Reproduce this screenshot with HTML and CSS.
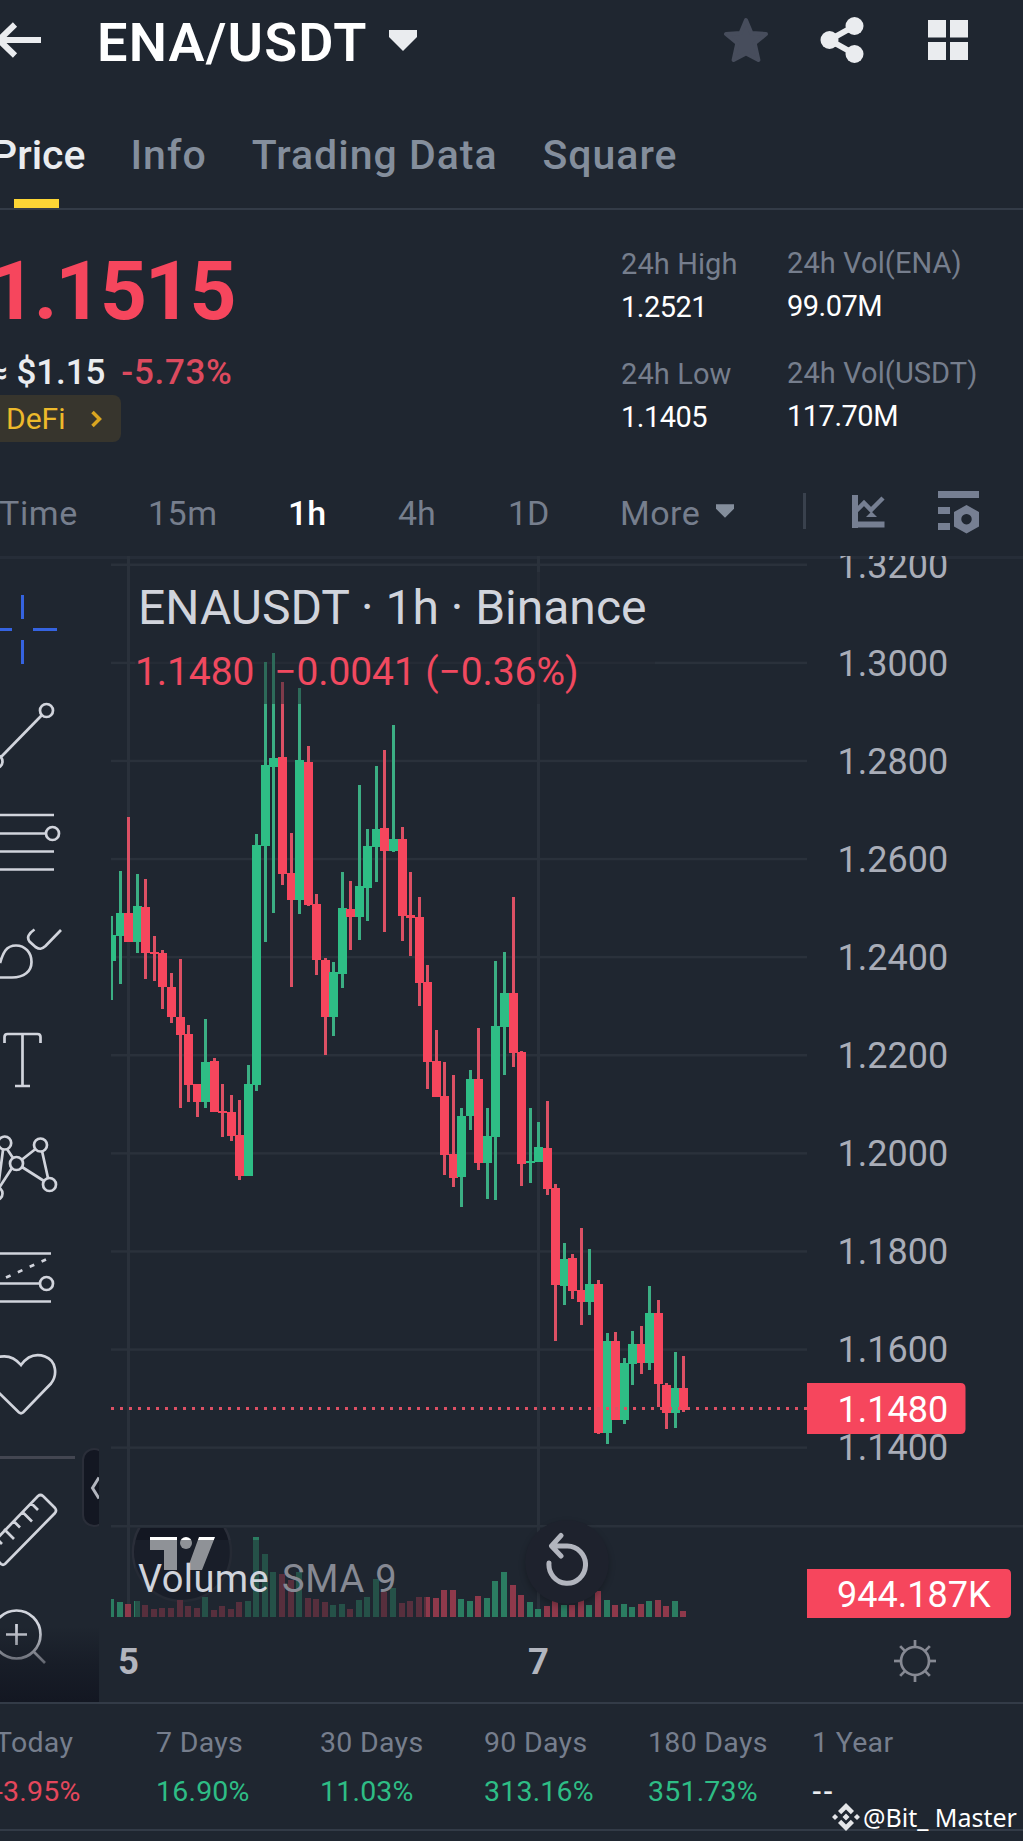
FILE: index.html
```html
<!DOCTYPE html>
<html lang="en">
<head>
    <meta charset="UTF-8">
    <meta name="viewport" content="width=device-width, initial-scale=1.0">
    <title>ENA/USDT</title>
    <link rel="stylesheet" href="styles.css">
</head>
<body>
    <header class="header">
        <svg class="back" width="42" height="40" viewBox="0 0 42 40" fill="none" stroke="#EAECEF" stroke-width="6">
            <path d="M41 20H2M15 4.500L-1 20l16 15.500"/>
        </svg>
        <h1 class="pair">ENA/USDT</h1>
        <svg class="caret" width="28" height="21" viewBox="0 0 28 21" fill="#EAECEF"><path d="M0 0h28v7L14 21 0 7z"/></svg>
        <div class="header-actions">
            <svg width="46" height="46" viewBox="0 0 46 46" fill="#474D5C" stroke="#474D5C" stroke-width="4" stroke-linejoin="round">
                <path d="M23 3l5.400 13 14.600 1-11.300 9.300L35.400 43 23 36.500 10.600 43l3.700-16.700L3 17l14.600-1z"/>
            </svg>
            <svg class="icon-share" width="44" height="46" viewBox="0 0 44 46" fill="#EAECEF">
                <path d="M34.500 9L9.500 23l25 14" fill="none" stroke="#EAECEF" stroke-width="6"/>
                <circle cx="34.500" cy="9" r="9"/><circle cx="9.500" cy="23" r="9"/><circle cx="34.500" cy="37" r="9"/>
            </svg>
            <svg width="40" height="40" viewBox="0 0 40 40" fill="#EAECEF">
                <path d="M0 0h18v17.500H0zM22 0h18v17.500H22zM0 22h18v18H0zM22 22h18v18H22z"/>
            </svg>
        </div>
    </header>

    <nav class="tabs">
        <a class="tab active">Price</a>
        <a class="tab">Info</a>
        <a class="tab">Trading Data</a>
        <a class="tab">Square</a>
    </nav>

    <section class="summary">
        <div class="quote">
            <div class="last-price">1.1515</div>
            <div class="quote-line"><span class="fiat">≈ $1.15</span><span class="change">-5.73%</span></div>
            <div class="tag">DeFi<svg width="12" height="18" viewBox="0 0 12 18" fill="none" stroke="#D9A520" stroke-width="3.500"><path d="M1.500 2l7 7-7 7"/></svg></div>
        </div>
        <div class="stats stats-price">
            <div class="stat"><label>24h High</label><b>1.2521</b></div>
            <div class="stat"><label>24h Low</label><b>1.1405</b></div>
        </div>
        <div class="stats stats-volume">
            <div class="stat"><label>24h Vol(ENA)</label><b>99.07M</b></div>
            <div class="stat"><label>24h Vol(USDT)</label><b>117.70M</b></div>
        </div>
    </section>

    <nav class="intervals">
        <a class="i-time">Time</a>
        <a class="i-15m">15m</a>
        <a class="i-1h active">1h</a>
        <a class="i-4h">4h</a>
        <a class="i-1d">1D</a>
        <a class="i-more">More</a>
        <svg class="caret-small" width="18" height="14" viewBox="0 0 28 21" fill="#848E9C"><path d="M0 0h28v7L14 21 0 7z"/></svg>
        <span class="divider"></span>
        <svg class="icon-draw" width="33" height="33" viewBox="0 0 33 33" fill="none" stroke="#767F92">
            <path d="M3 0v33M0 29.500h32.500" stroke-width="6"/>
            <path d="M4 16l8-8 7 7L31 3" stroke-width="4.500"/>
            <path d="M14 22l5.500-5.500L25 22z" fill="#767F92" stroke="none"/>
        </svg>
        <svg class="icon-settings" width="42" height="44" viewBox="0 0 42 44" fill="#767F92">
            <path d="M0 0h41v7H0zM0 16h12v7H0zM0 32h12v7H0z"/>
            <path fill-rule="evenodd" d="M28.500 14L41 21v14.500l-12.500 7L16 35.500V21zM28.500 23a5.200 5.200 0 1 0 .01 0z"/>
        </svg>
    </nav>

    <main class="chart">
        <aside class="toolbar">
            <!-- every tool sits in a 108px slot, icons run off the left edge -->
            <svg class="tool tool-cross" viewBox="0 576 99 108"><path d="M0 629.500h12M33 629.500h24M22.500 595v24M22.500 640v24"/></svg>
            <svg class="tool" viewBox="0 684 99 108"><circle cx="46.500" cy="710.500" r="6.500"/><circle cx="-4" cy="761.500" r="6.500"/><path d="M42 715L1 757"/></svg>
            <svg class="tool" viewBox="0 792 99 108"><path d="M0 815h54M0 833.500h45M0 851.500h54M0 869.500h54"/><circle cx="52.500" cy="833.500" r="6.500"/></svg>
            <svg class="tool" viewBox="0 900 99 108"><path d="M-4 977.500h16c12 0 19.500-6 19.500-15.500S25 945.500 16 945.500C6 945.500 3 953 0 963M34.500 929.500c-6 4-8 8-5 12l6 5.500c4 2.500 6 2.500 10-1L61 930"/></svg>
            <svg class="tool" viewBox="0 1008 99 108"><path d="M4.500 1043v-6c0-2 1-3 3-3h30c2 0 3 1 3 3v6M22.500 1034v52M15 1086h15"/></svg>
            <svg class="tool" viewBox="0 1116 99 108"><circle cx="4.700" cy="1143" r="6.500"/><circle cx="40.500" cy="1145" r="6.500"/><circle cx="16.500" cy="1163.500" r="6.500"/><circle cx="49.500" cy="1184.500" r="6.500"/><circle cx="-4" cy="1193.500" r="6.500"/><path d="M7 1149l6 9M21.500 1160l14-11M42 1151l6 27M22 1167l22 14M12 1168l-13 20M3 1150l-5 38"/></svg>
            <svg class="tool" viewBox="0 1224 99 108"><path d="M0 1253.500h51M0 1283.500h39M0 1301.500h51"/><path d="M6 1277.500l40-18" stroke-dasharray="5 8"/><circle cx="46.500" cy="1283.500" r="6.500"/></svg>
            <svg class="tool" viewBox="0 1332 99 108"><path d="M21 1365c8-11 17-11 24-8.500 11 4 13 18 6 27L23 1412.500q-2 1.500-4 0L-9 1385c-8-9-5-24 6-27.500 8-2.500 16-2 24 7.500z"/></svg>
            <div class="toolbar-line"></div>
            <svg class="tool" viewBox="0 1476 99 108"><path d="M38 1496q2.500-2 5 0l12 12q2 2.500 0 5L5 1564q-2 1.500-4 0l-12-12q-2-2.500 0-5zM31 1503l7 7M22 1511.500l10 10M13 1520.500l7 7M4 1529l10 10M-4 1538l6 6"/></svg>
            <svg class="tool" viewBox="0 1584 99 108"><circle cx="16.500" cy="1634.500" r="24"/><path d="M6 1634.500h21M16.500 1624v21M34 1652l11 11"/></svg>
            <div class="toolbar-fade"></div>
            <div class="collapse"><svg width="12" height="24" viewBox="0 0 12 24" fill="none" stroke="#B2B5BE" stroke-width="3"><path d="M9 1.500L2.500 12 9 22.500"/></svg></div>
        </aside>
        <div class="plot">
            <svg id="plot" width="924" height="1146" viewBox="99 556 924 1146"></svg>
            <div class="legend">
                <div class="legend-title">ENAUSDT · 1h · Binance</div>
                <div class="legend-values"><span>1.1480</span><span>−0.0041 (−0.36%)</span></div>
            </div>
            <div class="volume-legend"><span>Volume</span><span class="sma">SMA 9</span></div>
            <div class="reset">
                <svg width="44" height="56" viewBox="0 0 44 56" fill="none" stroke="#B2B5BE" stroke-width="5" stroke-linecap="round" stroke-linejoin="round">
                    <path d="M5 33a18.300 18.600 0 1 0 18.300-17H8M17 5.500L7.500 16 17 26"/>
                </svg>
            </div>
        </div>
    </main>

    <section class="periods">
        <div class="period"><label>Today</label><b class="down">-3.95%</b></div>
        <div class="period"><label>7 Days</label><b>16.90%</b></div>
        <div class="period"><label>30 Days</label><b>11.03%</b></div>
        <div class="period"><label>90 Days</label><b>313.16%</b></div>
        <div class="period"><label>180 Days</label><b>351.73%</b></div>
        <div class="period"><label>1 Year</label><b class="none">--</b></div>
    </section>

    <div class="watermark">
        <svg width="28" height="28" viewBox="0 0 28 28" fill="#E4E5E8">
            <path d="M14 0l8 8-3.200 3.200L14 6.400l-4.800 4.800L6 8zM14 28l-8-8 3.200-3.200 4.800 4.800 4.800-4.800L22 20zM3 10.900L6.100 14 3 17.100-.1 14zM25 10.900l3.100 3.100-3.100 3.100-3.100-3.100zM14 10.500l3.500 3.500-3.500 3.500-3.500-3.500z"/>
        </svg>
        <span>@Bit_ Master</span>
    </div>
    <script src="script.js"></script>
</body>
</html>
```
FILE: styles.css
```css
* {
    margin: 0;
    padding: 0;
    box-sizing: border-box;
}

body {
    width: 1023px;
    height: 1841px;
    overflow: hidden;
    position: relative;
    background-color: #1F2630;
    color: #EAECEF;
    font-family: Roboto, sans-serif;
}

svg {
    display: block;
    flex-shrink: 0;
}

.header {
    height: 80px;
    display: flex;
    align-items: center;
}

.pair {
    margin-left: 55px;
    padding-top: 5px;
    font-size: 54px;
    line-height: 60px;
    font-weight: 600;
    letter-spacing: 1.2px;
    color: #fff;
}

.caret {
    margin-left: 21px;
}

.header-actions {
    display: flex;
    align-items: center;
    gap: 51px;
    margin-left: auto;
    margin-right: 55px;
}

.icon-share {
    margin-right: 13px;
}

.tabs {
    height: 130px;
    padding-top: 55px;
    display: flex;
    gap: 45px;
    border-bottom: 2px solid #333B47;
}

.tab {
    position: relative;
    font-size: 41px;
    line-height: 40px;
    font-weight: 500;
    letter-spacing: 1px;
    color: #848E9C;
}

.tab.active {
    margin-left: -9px;
    letter-spacing: 0;
    color: #EAECEF;
}

.tab.active::after {
    content: "";
    position: absolute;
    left: 23px;
    top: 64px;
    width: 45px;
    height: 9px;
    background-color: #FCD535;
}

.summary {
    height: 264px;
    display: flex;
}

.quote {
    width: 621px;
}

.last-price {
    margin-left: -11px;
    padding-top: 41px;
    font-size: 82px;
    line-height: 80px;
    font-weight: 700;
    letter-spacing: -2.3px;
    color: #F6465D;
}

.quote-line {
    margin-top: 19px;
    margin-left: -12px;
    height: 45px;
    display: flex;
    gap: 16px;
    font-size: 35px;
    line-height: 46px;
    font-weight: 500;
}

.fiat {
    letter-spacing: -0.1px;
}

.change {
    letter-spacing: 0.7px;
    color: #DC4A5E;
}

.tag {
    width: 121px;
    height: 47px;
    padding-left: 6px;
    display: flex;
    align-items: center;
    gap: 26px;
    border-radius: 0 8px 8px 0;
    background-color: #37352D;
    font-size: 30px;
    line-height: 47px;
    color: #EDB92B;
}

.stats {
    width: 166px;
    padding-top: 32px;
}

.stats-volume {
    width: auto;
    padding-top: 31px;
}

.stat {
    height: 110px;
}

.stat label,
.stat b {
    display: block;
    height: 43px;
    font-size: 29px;
    line-height: 44px;
    white-space: nowrap;
}

.stat label {
    letter-spacing: 0.1px;
    color: #767E8D;
}

.stat b {
    font-weight: 400;
    letter-spacing: -0.5px;
    color: #fff;
}

.intervals {
    height: 82px;
    padding-bottom: 4px;
    padding-left: 1px;
    display: flex;
    align-items: center;
    font-size: 34px;
    line-height: 78px;
    color: #767E8D;
    box-shadow: 0 3px 0 #262D38;
}

.intervals .active {
    font-weight: 500;
    color: #fff;
}

.i-time {
    margin-left: -2px;
    width: 149px;
    letter-spacing: 0.6px;
}

.i-15m {
    width: 140px;
    letter-spacing: 0.5px;
}

.i-1h {
    width: 110px;
}

.i-4h {
    width: 110px;
}

.i-1d {
    width: 112px;
}

.i-more {
    width: 96px;
    letter-spacing: 0.5px;
}

.caret-small {
    margin-top: -4px;
}

.divider {
    width: 3px;
    height: 36px;
    margin: -4px 46px 0 69px;
    background-color: #39414D;
}

.icon-draw {
    margin-top: -4px;
}

.icon-settings {
    margin: 0 0 0 53px;
}

.chart {
    display: flex;
    height: 1148px;
    border-bottom: 2px solid #333B47;
}

.toolbar {
    position: relative;
    width: 99px;
    padding-top: 20px;
    overflow: hidden;
}

.tool {
    width: 99px;
    height: 108px;
    fill: none;
    stroke: #D1D4DC;
    stroke-width: 2.7;
}

.tool-cross {
    stroke: #3563E0;
    stroke-width: 3;
}

.toolbar-line {
    width: 75px;
    height: 3px;
    margin: 16px 0 17px;
    background-color: #434651;
}

.toolbar-fade {
    position: absolute;
    left: 0;
    bottom: 0;
    width: 99px;
    height: 76px;
    background: linear-gradient(rgba(19, 23, 34, 0), rgba(19, 23, 34, .6) 50%, #131722);
}

.collapse {
    position: absolute;
    left: 82px;
    top: 892px;
    width: 24px;
    height: 79px;
    padding: 26px 0 0 6px;
    border: 2px solid #2A2E39;
    border-radius: 14px;
    background-color: #131722;
}

.plot {
    position: relative;
    width: 924px;
}

.legend {
    position: absolute;
    left: 36px;
    top: 16px;
    width: 520px;
    height: 132px;
    background-color: rgba(31, 38, 48, .5);
}

.legend-title {
    padding: 1px 0 0 3px;
    font-size: 48px;
    line-height: 70px;
    color: #D1D4DC;
    white-space: nowrap;
}

.legend-values {
    display: flex;
    gap: 20px;
    font-size: 39px;
    line-height: 58px;
    letter-spacing: -0.1px;
    color: #F0495F;
    white-space: nowrap;
}

.volume-legend {
    position: absolute;
    left: 36px;
    top: 984px;
    width: 291px;
    height: 77px;
    padding-left: 3px;
    display: flex;
    gap: 13px;
    font-size: 38px;
    line-height: 78px;
    letter-spacing: 0.4px;
    color: #D1D4DC;
    background-color: rgba(31, 38, 48, .5);
}

.sma {
    letter-spacing: 0.7px;
    color: #868993;
}

.reset {
    position: absolute;
    left: 426px;
    top: 964px;
    width: 84px;
    height: 84px;
    padding: 10px 0 0 19px;
    border-radius: 50%;
    background-color: #1E222D;
    box-shadow: 0 3px 6px rgba(0, 0, 0, .25);
}

.axis {
    font-size: 36px;
    fill: #A9ADB8;
}

.axis-tag {
    font-size: 36px;
    fill: #fff;
}

.axis-day {
    font-size: 36.5px;
    font-weight: 700;
    fill: #B2B5BE;
    text-anchor: middle;
}

.periods {
    height: 127px;
    display: flex;
    border-bottom: 2px solid #333B47;
}

.period {
    width: 164px;
    flex-shrink: 0;
    padding-top: 15px;
    font-size: 28.5px;
}

.period:first-child {
    width: 161px;
    margin-left: -5px;
}

.period label,
.period b {
    display: block;
    height: 48px;
    line-height: 48px;
    font-weight: 400;
    white-space: nowrap;
}

.period label {
    letter-spacing: 0.3px;
    color: #767E8D;
}

.period b {
    letter-spacing: 0.2px;
    line-height: 49px;
    color: #2EBD85;
}

.period .down {
    color: #E5475C;
}

.period .none {
    font-weight: 500;
    letter-spacing: 1.5px;
    color: #EAECEF;
}

.watermark {
    position: absolute;
    left: 832px;
    top: 1800px;
    height: 34px;
    display: flex;
    align-items: center;
    gap: 3px;
    font: 25px/34px "Noto Sans", sans-serif;
    color: #fff;
    white-space: nowrap;
}
```
FILE: script.js
```js
// [up, high, body top, body bottom, low, volume]
const candles = [
    [1, 916, 935, 961, 1000, 18], [1, 871, 913, 936, 984, 15], [0, 817, 913, 942, 942, 13], [1, 874, 906, 942, 953, 16],
    [0, 879, 907, 953, 979, 12], [0, 936, 952, 954, 981, 8], [0, 950, 953, 987, 1009, 9], [0, 973, 987, 1017, 1023, 9],
    [0, 959, 1017, 1035, 1108, 17], [0, 1025, 1034, 1085, 1102, 11], [0, 1084, 1084, 1102, 1117, 9], [1, 1019, 1062, 1102, 1108, 20],
    [0, 1058, 1061, 1112, 1112, 7], [0, 1084, 1111, 1112, 1137, 11], [0, 1095, 1112, 1136, 1141, 8], [0, 1100, 1135, 1176, 1180, 15],
    [1, 1065, 1084, 1176, 1176, 16], [1, 834, 845, 1085, 1091, 80], [1, 662, 765, 846, 942, 63], [1, 653, 758, 767, 913, 45],
    [0, 682, 757, 874, 885, 43], [0, 833, 873, 900, 987, 37], [1, 688, 760, 900, 914, 45], [0, 746, 762, 905, 906, 19],
    [0, 894, 904, 960, 975, 18], [0, 958, 960, 1017, 1055, 15], [1, 962, 972, 1017, 1036, 12], [1, 872, 908, 974, 988, 13],
    [0, 881, 909, 917, 950, 8], [1, 785, 886, 917, 940, 17], [1, 829, 846, 888, 921, 20], [1, 766, 829, 847, 882, 38],
    [0, 750, 828, 851, 932, 25], [1, 725, 839, 851, 852, 29], [0, 827, 839, 916, 941, 14], [0, 872, 915, 918, 956, 16],
    [0, 897, 917, 983, 1006, 20], [0, 965, 982, 1062, 1089, 20], [0, 1030, 1061, 1097, 1097, 19], [0, 1062, 1096, 1155, 1175, 27],
    [0, 1075, 1154, 1178, 1187, 27], [1, 1108, 1116, 1177, 1207, 18], [1, 1070, 1079, 1116, 1130, 16], [0, 1028, 1079, 1163, 1170, 21],
    [1, 1108, 1136, 1163, 1199, 19], [1, 961, 1026, 1137, 1200, 36], [1, 952, 993, 1027, 1075, 45], [0, 897, 993, 1053, 1067, 32],
    [0, 1051, 1052, 1164, 1186, 22], [1, 1108, 1161, 1163, 1183, 15], [1, 1122, 1147, 1162, 1162, 8], [0, 1101, 1148, 1189, 1195, 11],
    [0, 1184, 1188, 1285, 1341, 27], [1, 1243, 1259, 1286, 1305, 12], [0, 1254, 1258, 1291, 1299, 12], [0, 1228, 1290, 1302, 1325, 20],
    [1, 1249, 1284, 1302, 1315, 12], [0, 1280, 1284, 1433, 1434, 26], [1, 1333, 1341, 1433, 1444, 17], [0, 1332, 1341, 1420, 1420, 12],
    [1, 1358, 1363, 1420, 1424, 13], [1, 1331, 1344, 1364, 1385, 10], [0, 1326, 1344, 1363, 1374, 13], [1, 1286, 1313, 1363, 1370, 16],
    [0, 1300, 1313, 1384, 1407, 17], [0, 1383, 1385, 1413, 1429, 11], [1, 1352, 1388, 1413, 1428, 16], [0, 1356, 1388, 1410, 1412, 6]
];

const left = 111;
const right = 807;
const step = 8.54;
let out = '';

function rect(x, y, w, h, fill) {
    out += `<rect x="${x}" y="${y}" width="${w}" height="${h}" fill="${fill}"/>`;
}

// grid and price labels
for (let i = 0; i < 10; i++) {
    const y = 564.5 + i * 98.1;
    rect(left, y - 1, right - left, 2.5, '#2A313B');
    out += `<text class="axis" x="837.500" y="${y + 13}">${(1.32 - i * 0.02).toFixed(4)}</text>`;
}
rect(127, 556, 3, 1061, '#2A313B');
rect(537, 556, 3, 1061, '#2A313B');
rect(left, 1525, 912, 2.5, '#2A313B');

// TradingView badge, cut off by the pane border
out += `<clipPath id="pane"><rect x="${left}" y="1528" width="700" height="100"/></clipPath>
    <g clip-path="url(#pane)"><circle cx="182" cy="1552" r="49" fill="#131722" stroke="#2A2E39" stroke-width="2.500"/>
    <path d="M150 1537h27v33h-13v-20h-14zM199 1537h16l-13 33h-15z" fill="#fff"/><circle cx="186" cy="1543" r="6" fill="#fff"/></g>`;

out += `<clipPath id="area"><rect x="${left}" y="556" width="${right - left}" height="1070"/></clipPath><g clip-path="url(#area)">`;
candles.forEach(([up, high, top, bottom, low, volume], i) => {
    const x = Math.round(111.2 + i * step);
    rect(x - 1, high, 3, low - high, up ? '#3BAE83' : '#DC5064');
    rect(x - 4, top, 9, Math.max(bottom - top, 2), up ? '#2EBD85' : '#F6465D');
    rect(x - 3, 1617 - volume, 6, volume, up ? '#2B7C61' : '#8E394B');
});
out += '</g>';

// last price
out += `<path d="M${left} 1408.500H${right}" stroke="#DC5064" stroke-width="3" stroke-dasharray="3 6"/>
    <path d="M807 1383h153.500q5 0 5 5v41q0 5-5 5H807z" fill="#F6465D"/>
    <path d="M807 1569h199q5 0 5 5v39q0 5-5 5H807z" fill="#F6465D"/>
    <text class="axis-tag" x="837.500" y="1421.500">1.1480</text>
    <text class="axis-tag" x="837" y="1606.500">944.187K</text>
    <text class="axis-day" x="128.500" y="1674">5</text>
    <text class="axis-day" x="538.500" y="1674">7</text>`;

// scale settings
out += '<g fill="none" stroke="#868993" stroke-width="2.700"><circle cx="915" cy="1661" r="14"/>';
for (let i = 0; i < 8; i++) {
    out += `<path d="M915 1647v-7" transform="rotate(${i * 45} 915 1661)"/>`;
}
out += '</g>';

document.getElementById('plot').innerHTML = out;
```
